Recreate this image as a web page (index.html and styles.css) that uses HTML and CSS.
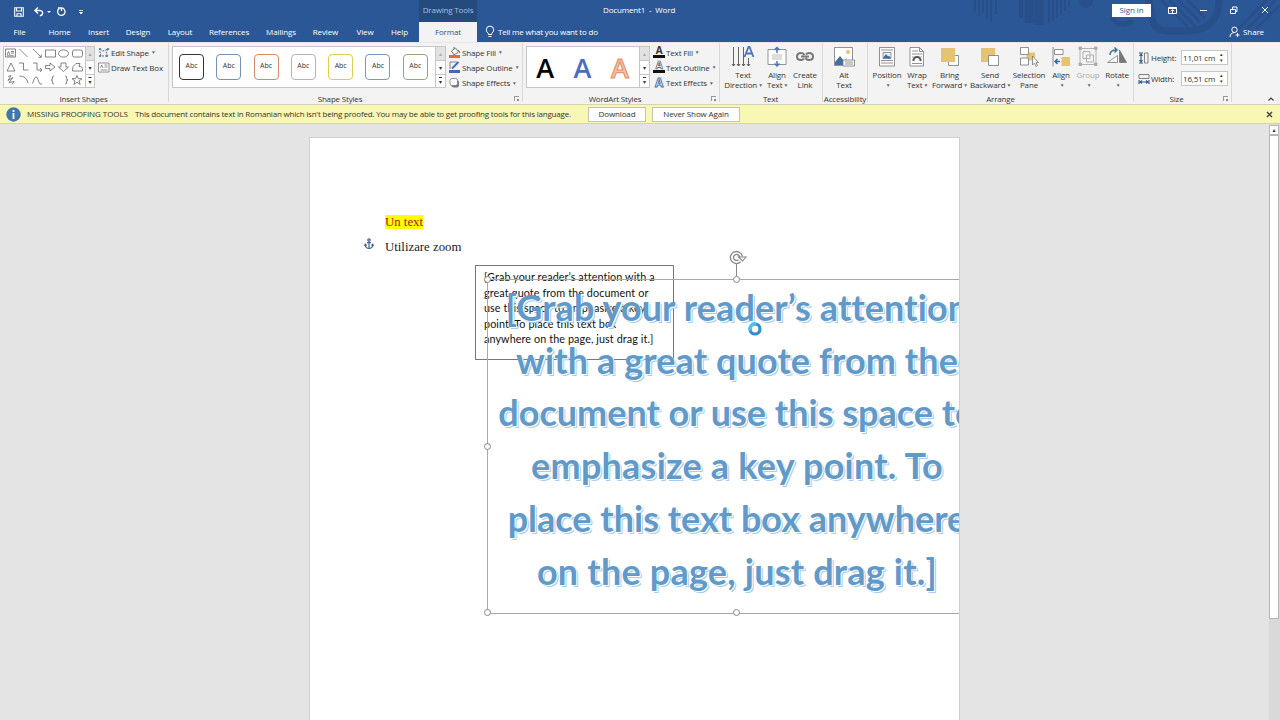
FILE: index.html
```
<!DOCTYPE html>
<html lang="en">
<head>
<meta charset="utf-8">
<title>Document1 - Word</title>
<link rel="stylesheet" href="styles.css">
</head>
<body>
<div class="app">
  <header class="top">
    <svg class="pattern" width="340" height="42" viewBox="940 0 340 42">
      <g stroke="#294f8b" stroke-width="2" fill="none">
        <path d="M975 0v12M979 0v16M983 0v13M987 0v19M991 0v22M996 0v14M1049 0v23M1053 0v21M1057 0v18M1061 0v15M1065 0v11M1069 0v7"/>
        <path stroke-width="4" d="M1021 0v18"/>
        <path stroke-width="9" d="M1029 0v23M1039 0v25"/>
        <path stroke-width="5" d="M1112 17a12 12 0 0 0 20 3"/>
        <path stroke-width="7" d="M1149 0l3 17q2 14 15 14h22q30-2 30-31"/>
        <path stroke-width="3" d="M1161 0l27 27M1169 0l27 27M1178 0l22 22M1187 0l18 18M1238 29l29-29M1247 29l29-29M1256 29l24-24"/>
      </g>
      <circle cx="1086" cy="1" r="7" fill="#294f8b"/>
    </svg>
    <div class="titlebar">
      <div class="quick">
        <svg width="90" height="20" viewBox="0 0 90 20" fill="none" stroke="#fff" stroke-width="1.1">
          <path d="M14.700 6.700h8.600v8.600h-8.600zM16.500 6.700v3.300h5v-3.300M17 15.300v-2.600h4v2.600"/>
          <path d="M38 6.500l-3 3 3 3M35.500 9.500h4.500q3 .3 2.600 3-.4 2-2.800 2.200" stroke-width="1.400"/>
          <path d="M47 10l2 2 2-2z" fill="#fff" stroke="none"/>
          <path d="M59 7.800a3.700 3.700 0 1 0 5 .3M58 7h3.500v3M64 8q-1.200-1.200-2.800-1" stroke-width="1.300"/>
          <path d="M79 9.500h4M79.500 11.500h3l-1.500 1.500z" fill="#fff" stroke-width=".8"/>
        </svg>
      </div>
      <div class="context">Drawing Tools</div>
      <div class="doctitle">Document1&nbsp; - &nbsp;Word</div>
      <div class="signin">Sign in</div>
      <svg class="winctl" width="120" height="20" viewBox="1160 0 120 20" fill="none" stroke="#fff" stroke-width="1">
        <path d="M1168.500 7.500h8v6h-8zM1168 8.500h9M1172.500 13v-3M1170.800 11.300l1.700-1.700 1.700 1.700M1200 10.500h7M1230.500 9.500h5v4h-5zM1232.500 9v-2h4.500v4.500h-1.500M1262 7l6 6M1268 7l-6 6"/>
      </svg>
    </div>
    <nav class="tabs">
      <a class="w39">File</a><a class="w41">Home</a><a class="w37">Insert</a><a class="w42">Design</a><a class="w42">Layout</a><a class="w56">References</a><a class="w48">Mailings</a><a class="w41">Review</a><a class="w38">View</a><a class="w31">Help</a><a class="active">Format</a>
      <div class="tell"><svg width="10" height="14" viewBox="0 0 10 14" fill="none" stroke="#fff"><path d="M3.300 9.500V8.300Q1.300 7 1.300 4.800a3.700 3.700 0 0 1 7.400 0Q8.700 7 6.700 8.300v1.200zM3.500 11.500h3"/></svg>Tell me what you want to do</div>
      <div class="share"><svg width="11" height="12" viewBox="0 0 11 12" fill="none" stroke="#fff"><circle cx="5.500" cy="3.800" r="2.700"/><path d="M1 11q0-4 4.500-4.500M6.500 9h4M8.500 7v4"/></svg>Share</div>
    </nav>
  </header>

  <section class="ribbon">
    <div class="group g-insert">
      <div class="body">
        <div class="gallery shapes">
          <svg width="82" height="41" viewBox="3 46.500 82 41" fill="none" stroke="#666" stroke-width=".8">
            <path d="M5.500 49.500h10v8h-10zM7 55.500l1.500-3.500 1.500 3.500M11 52h3M11 53.500h3M7 56.300h7"/>
            <path d="M19.500 49.500l8 8M33 49.500l8 8M41.300 55v2.800h-2.800M45.500 50.500h10v7h-10z"/>
            <ellipse cx="63.500" cy="54" rx="5" ry="3.600"/><rect x="72.500" y="50.500" width="10" height="7" rx="1.800"/>
            <path d="M7 71.500l4-8 4 8zM19 63.500h4.500v7h5M33 63.500h4v7h5M40 68.500l2 2-2 2M45.500 66h4.500v-2.500l5 4-5 4v-2.500h-4.500zM61 63.500h5v4h2.500l-5 4.500-5-4.500h2.500zM73 67l3-3h4l-1 3q4-1 3.500 4.500h-10z"/>
            <path d="M8 77l3-1-3 5 5-3-4 5 5-1-2 3M19.500 76.500q7 0 8.500 7M32.500 84q3.500-11 5.500-4t4 4M54 76.500q-2 0-1.500 2 0 2-1.500 2 1.500 0 1.500 2-.5 2 1.500 2M65 76.500q2 0 1.500 2 0 2 1.500 2-1.500 0-1.500 2 .5 2-1.500 2M77 76l1.300 3.200h3.700l-3 2.200 1.200 3.600-3.200-2.200-3.200 2.200 1.200-3.600-3-2.200h3.700z"/>
          </svg>
          <div class="scroll"><i class="off">▴</i><i>▾</i><i>▾</i></div>
        </div>
        <div class="list edit">
          <div><svg width="12" height="11" viewBox="0 0 12 11" fill="none" stroke="#667"><path d="M2 2l3 2 5-2-2 4 2 3H3L2 5z" stroke-dasharray="2 1"/><path d="M1 1h2v2H1zM9 1h2v2H9zM1 8h2v2H1zM8 8h2v2H8z" fill="#4c94b0" stroke="none"/></svg>Edit Shape<b>▾</b></div>
          <div><svg width="12" height="11" viewBox="0 0 12 11" fill="#fff" stroke="#777" stroke-width=".8"><path d="M.5 1h10.500v9H.5zM2.500 6l1.200-3L5 6M6.500 3h3M6.500 5h3M2.500 8h7"/></svg>Draw Text Box</div>
        </div>
      </div>
      <div class="label">Insert Shapes</div>
    </div>

    <div class="group g-styles">
      <div class="body">
        <div class="gallery styles">
          <div class="chip c1">Abc</div><div class="chip c2">Abc</div><div class="chip c3">Abc</div><div class="chip c4">Abc</div><div class="chip c5">Abc</div><div class="chip c6">Abc</div><div class="chip c7">Abc</div>
          <div class="scroll"><i class="off">▴</i><i>▾</i><i>▾</i></div>
        </div>
        <div class="list">
          <div><svg width="12" height="12" viewBox="0 0 12 12" fill="#fff" stroke="#666" stroke-width=".9"><path d="M2.500 5l4-3 3 4-4.500 3zM5 3V.8M9 4q2 1 1.500 3"/><path d="M0 9h11v3H0z" fill="#e0702f" stroke="none"/></svg>Shape Fill<b>▾</b></div>
          <div><svg width="12" height="12" viewBox="0 0 12 12" fill="none" stroke="#777" stroke-width=".9"><path d="M1 8V1h7"/><path d="M3 7.500L9.500 1" stroke="#3f6db5" stroke-width="1.800"/><path d="M0 9h11v3H0z" fill="#4468b8" stroke="none"/></svg>Shape Outline<b>▾</b></div>
          <div><svg width="12" height="12" viewBox="0 0 12 12"><rect x="2.500" y="3" width="7.500" height="7.500" rx="2.500" fill="#777"/><rect x="1" y="1.500" width="7.500" height="7" rx="2" fill="#fff" stroke="#777" stroke-width=".8"/></svg>Shape Effects<b>▾</b></div>
        </div>
      </div>
      <div class="label">Shape Styles</div><span class="launch"></span>
    </div>

    <div class="group g-wordart">
      <div class="body">
        <div class="gallery arts">
          <span class="a1">A</span><span class="a2">A</span><span class="a3">A</span>
          <div class="scroll"><i class="off">▴</i><i>▾</i><i>▾</i></div>
        </div>
        <div class="list">
          <div><em class="f1">A</em>Text Fill<b>▾</b></div>
          <div><em class="f2">A</em>Text Outline<b>▾</b></div>
          <div><em class="f3">A</em>Text Effects<b>▾</b></div>
        </div>
      </div>
      <div class="label">WordArt Styles</div><span class="launch"></span>
    </div>

    <div class="group g-text">
      <div class="body">
        <div class="big w38"><svg width="24" height="22" viewBox="0 0 24 22" fill="none" stroke="#555"><path d="M2.500 1v19M7.500 1v19M12.500 1v19M17.500 12v8" stroke-width=".9"/><path d="M1 18l1.500 2L4 18M6 18l1.500 2L9 18M11 18l1.500 2 1.500-2M16 18l1.500 2 1.500-2"/><path d="M13.500 11L17.500 1h1l4 10M15 7.500h6" stroke="#4a77b4" stroke-width="1.800"/></svg><span>Text<br>Direction<b>▾</b></span></div>
        <div class="big w30"><svg width="20" height="22" viewBox="0 0 20 22" fill="#fff" stroke="#777" stroke-width=".8"><path d="M1 3.500h18v15H1z"/><path d="M5 8h10v6H5z" fill="#ddd" stroke="none"/><path d="M10 7V1.500M7.500 4L10 1.500 12.500 4M10 15v5M7.500 17.500L10 20l2.500-2.500" fill="none" stroke="#4a77b4" stroke-width="1.500"/></svg><span>Align<br>Text<b>▾</b></span></div>
        <div class="big w26"><svg width="20" height="22" viewBox="0 0 20 22" fill="none" stroke="#777" stroke-width="2"><path d="M9.500 9q-1-2-3.500-2-4 0-4 3.500T6 14q2 0 3-1.500M10.500 12q1 2 3.500 2 4 0 4-3.500T14 7q-2 0-3 1.500M6 10.500h8"/></svg><span>Create<br>Link</span></div>
      </div>
      <div class="label">Text</div>
    </div>

    <div class="group g-acc">
      <div class="body">
        <div class="big w36"><svg width="22" height="22" viewBox="0 0 22 22" fill="#fff" stroke="#777" stroke-width=".8"><path d="M1.500 1.500h18v18h-18z"/><path d="M2 19v-3l5-6 4 5 2-2 3 6z" fill="#416f9e" stroke="none"/><circle cx="15" cy="6" r="2" fill="#e9c46b" stroke="none"/><path d="M10 14h11.500v6H10zM12 16h8M12 18h8"/></svg><span>Alt<br>Text</span></div>
      </div>
      <div class="label">Accessibility</div>
    </div>

    <div class="group g-arrange">
      <div class="body">
        <div class="big w36"><svg width="18" height="22" viewBox="0 0 18 22" fill="#fff" stroke="#777" stroke-width=".8"><path d="M1.500 1.500h15v18.500h-15zM3 4h12M3 14.500h12M3 17h12"/><path d="M5 6.500h8v6H5z" fill="#ebf3fa"/><path d="M5 12l3-4 2 2.500 1-1 2 3z" fill="#3c69a3" stroke="none"/></svg><span>Position<br><b>▾</b></span></div>
        <div class="big w24"><svg width="16" height="22" viewBox="0 0 16 22" fill="#fff" stroke="#777" stroke-width=".8"><path d="M1 1.500h9.500l4 4V20H1zM10.500 1.500v4h4M3 5h6M3 8h10M3 17.500h10M3 11h1.500M3 14h1.500M11.500 11H13M11.500 14H13"/><path d="M4.500 15q0-4 3.500-4t3.500 4" fill="none" stroke="#555" stroke-width="1.800"/></svg><span>Wrap<br>Text<b>▾</b></span></div>
        <div class="big w41"><svg width="20" height="22" viewBox="0 0 20 22"><path d="M8.500 9.500h10v10h-10z" fill="#fff" stroke="#777" stroke-width=".8"/><path d="M1 2h14v14H1z" fill="#e5c274"/></svg><span>Bring<br>Forward<b>▾</b></span></div>
        <div class="big w40"><svg width="20" height="22" viewBox="0 0 20 22"><path d="M1 2h14v14H1z" fill="#e5c274"/><path d="M8.500 9.500h10v10h-10z" fill="#fff" stroke="#777" stroke-width=".8"/></svg><span>Send<br>Backward<b>▾</b></span></div>
        <div class="big w38"><svg width="20" height="22" viewBox="0 0 20 22" fill="#fff" stroke="#777" stroke-width=".8"><path d="M7.500 6.500H16v8H7.500z" fill="#e5c274" stroke="none"/><path d="M1.500 1.500h8v7h-8zM1.500 12h8v7h-8zM13.500 10v9l2-2 1.500 3.500 1.500-.7-1.500-3.300h2.500z"/></svg><span>Selection<br>Pane</span></div>
        <div class="big w26"><svg width="20" height="22" viewBox="0 0 20 22" fill="#fff" stroke="#777" stroke-width=".8"><path d="M2 1v19.500M3.500 3.500H12v5H3.500z"/><path d="M10.500 11H19v9h-8.500z" fill="#e5c274" stroke="none"/><path d="M9 15.500H4.500M6.500 13L4 15.500 6.500 18" fill="none" stroke="#3c69a3" stroke-width="1.500"/></svg><span>Align<br><b>▾</b></span></div>
        <div class="big w28 dim"><svg width="20" height="22" viewBox="0 0 20 22" fill="none" stroke="#aaa" stroke-width=".9"><path d="M2 2.500h16v16H2zM5 5.500h7v7H5zM8.500 9h7v7h-7z"/><path d="M1 1h2.500v2.500H1zM16.500 1H19v2.500h-2.500zM1 17h2.500v2.500H1zM16.500 17H19v2.500h-2.500z" fill="#aaa"/></svg><span>Group<br><b>▾</b></span></div>
        <div class="big w30"><svg width="22" height="22" viewBox="0 0 22 22" fill="#fff" stroke="#777" stroke-width=".8"><path d="M1.500 16.500L11.500 9.500v7z"/><path d="M13.500 4v12.500h7z" fill="#777"/><path d="M4 9q0-5 6-5M8.500 1.500L11 4 8.500 6.500" fill="none" stroke="#3f769e" stroke-width="1.600"/></svg><span>Rotate<br><b>▾</b></span></div>
      </div>
      <div class="label">Arrange</div>
    </div>

    <div class="group g-size">
      <div class="sizes">
        <div class="field"><svg width="12" height="12" viewBox="0 0 12 12" fill="none" stroke="#666" stroke-width=".8"><path d="M6.500 1H10v10H6.500z"/><path d="M1 1h4M1 11h4M3 2v8M1.500 3.800L3 2l1.500 1.800M1.500 8.200L3 10l1.500-1.800" stroke="#31588f" stroke-width="1.100"/></svg><span>Height:</span><div class="input">11,01 cm<i>▴<br>▾</i></div></div>
        <div class="field"><svg width="12" height="12" viewBox="0 0 12 12" fill="none" stroke="#666" stroke-width=".8"><path d="M1 1.500h10v4H1z"/><path d="M1 7v4M11 7v4M2 9h8M3.800 7.500L2 9l1.800 1.500M8.200 7.500L10 9l-1.800 1.500" stroke="#31588f" stroke-width="1.100"/></svg><span>Width:</span><div class="input">16,51 cm<i>▴<br>▾</i></div></div>
      </div>
      <div class="label">Size</div><span class="launch"></span>
    </div>
    <svg class="collapse" width="8" height="6" viewBox="0 0 8 6" fill="none" stroke="#444" stroke-width="1.200"><path d="M1.500 4.500L4 2l2.500 2.500"/></svg>
  </section>

  <div class="notice">
    <svg width="15" height="15" viewBox="0 0 15 15"><circle cx="7.500" cy="7.500" r="7.200" fill="#4277ad"/><path d="M7.500 6v6M7.500 3v2" stroke="#fff" stroke-width="1.800"/></svg>
    <span class="head">MISSING PROOFING TOOLS</span>
    <span class="msg">This document contains text in Romanian which isn't being proofed. You may be able to get proofing tools for this language.</span>
    <div class="btn download">Download</div><div class="btn never">Never Show Again</div>
    <svg class="close" width="7" height="7" viewBox="0 0 7 7" stroke="#444" stroke-width="1.400"><path d="M1 1l5 5M6 1L1 6"/></svg>
  </div>

  <main class="workspace">
    <article class="page">
      <p class="marked"><mark>Un text</mark></p>
      <p class="para">Utilizare zoom</p>
      <svg class="anchor" width="10" height="12" viewBox="0 0 10 12" fill="none" stroke="#42658f" stroke-width="1.200"><circle cx="5" cy="2" r="1.200"/><path d="M5 3.200v7M3 4.700h4M1 6.500q.5 3.800 4 4 3.500-.2 4-4M.5 8l.7-1.700L2.700 7.500M9.500 8l-.7-1.700L7.300 7.500"/></svg>
      <div class="quote">[Grab your reader’s attention with a<br>great quote from the document or<br>use this space to emphasize a key<br>point. To place this text box<br>anywhere on the page, just drag it.]</div>
      <div class="wordart">
        <div class="l1">[Grab your reader’s attention</div><div class="l2">with a great quote from the</div><div class="l3">document or use this space to</div><div class="l4">emphasize a key point. To</div><div class="l5">place this text box anywhere</div><div class="l6">on the page, just drag it.]</div>
        <i class="handle tl"></i><i class="handle tc"></i><i class="handle ml"></i><i class="handle bl"></i><i class="handle bc"></i>
        <svg class="rotate" width="20" height="30" viewBox="0 0 20 30" fill="none" stroke="#888"><path d="M8.500 15v12"/><path d="M14.300 7.500a6 6 0 1 0-1.600 5.200M11.500 8.500a3 3 0 1 0-1 2.200" stroke-width="1.300"/><path d="M10.500 8h7.500l-3.500 4z" fill="#fff" stroke-width="1.100"/></svg>
      </div>
      <svg class="busy" width="14" height="14" viewBox="0 0 14 14" fill="none" stroke-width="3.200"><circle cx="7" cy="7" r="5" fill="#fff" stroke="#2f8fd0"/><path d="M2.300 8.500A5 5 0 0 1 8 2.100" stroke="#49c4ee"/></svg>
    </article>
    <div class="vbar"><i>▴</i><div class="thumb"></div></div>
  </main>
</div>
</body>
</html>
```
FILE: styles.css
```
* { box-sizing: border-box; }
body { margin: 0; width: 1280px; height: 720px; overflow: hidden; font-family: "Open Sans", "Noto Sans", sans-serif; font-size: 8px; letter-spacing: -.18px; color: #333; }
.app { display: flex; flex-direction: column; height: 720px; }
b, i, em { font-style: normal; font-weight: normal; }
svg { flex: none; display: block; }

.top { position: relative; height: 42px; background: #2b5797; color: #fff; }
.pattern { position: absolute; right: 0; top: 0; }
.titlebar { position: relative; display: flex; height: 22px; line-height: 20px; }
.quick { width: 419px; }
.quick svg { margin-top: 1px; }
.context { width: 58px; background: #254a7e; color: #a9bfdf; text-align: center; }
.doctitle { margin-left: 126px; width: 509px; letter-spacing: -.15px; }
.signin { width: 39px; height: 13px; margin-top: 4px; background: #fff; color: #2b5797; text-align: center; line-height: 12px; letter-spacing: -.1px; }
.winctl { margin-left: 9px; }
.tabs { position: relative; display: flex; height: 20px; line-height: 20px; letter-spacing: -.12px; }
.tabs a { text-align: center; white-space: nowrap; }
.tabs .active { width: 58px; margin-left: 4px; background: #f3f3f3; color: #2b5797; }
.tell, .share { display: flex; align-items: center; gap: 3px; }
.tell { margin-left: 8px; letter-spacing: -.2px; }
.share { margin-left: auto; margin-right: 16px; }
.w24 { width: 24px; } .w26 { width: 26px; } .w28 { width: 28px; } .w30 { width: 30px; } .w31 { width: 31px; }
.w36 { width: 36px; } .w37 { width: 37px; } .w38 { width: 38px; } .w39 { width: 39px; } .w40 { width: 40px; }
.w41 { width: 41px; } .w42 { width: 42px; } .w48 { width: 48px; } .w56 { width: 56px; }

.ribbon { display: flex; height: 62px; background: #f3f3f3; border-top: 1px solid #e4e8ee; }
.group { position: relative; display: flex; flex-direction: column; height: 59px; border-right: 1px solid #d8d8d8; padding-top: 3px; }
.body, .sizes { flex: none; display: flex; height: 46px; }
.label { flex: none; text-align: center; line-height: 13px; white-space: nowrap; }
.g-insert { width: 169px; padding-left: 3px; }
.g-insert .label { margin-right: 4px; }
.g-styles { width: 354px; padding-left: 3px; }
.g-styles .label { margin-right: 14px; }
.g-wordart { width: 197px; padding-left: 3px; }
.g-wordart .label { margin-right: 15px; }
.g-text { width: 103px; padding-left: 4px; }
.g-text .label { margin-right: 5px; }
.g-acc { width: 45px; padding-left: 3px; }
.g-acc .label { margin-left: -3px; }
.g-arrange { width: 266px; padding-left: 1px; }
.g-arrange .label { margin-right: 1px; }
.g-size { width: 98px; padding-left: 4px; }
.g-size .label { margin-right: 16px; }
.launch { position: absolute; right: 3px; bottom: 1px; width: 5px; height: 5px; border-left: 1px solid #999; border-top: 1px solid #999; background: linear-gradient(#888, #888) right bottom / 2px 2px no-repeat; }
.gallery { display: flex; height: 42px; background: #fff; border: 1px solid #c6c6c6; }
.shapes { width: 92px; }
.shapes svg { margin: -1px 0 0 -1px; }
.scroll { margin-left: auto; width: 10px; display: flex; flex-direction: column; border-left: 1px solid #c6c6c6; }
.scroll i { flex: 1; line-height: 13px; font-size: 6px; font-weight: 400; text-align: center; letter-spacing: 0; font-family: "DejaVu Sans", sans-serif; }
.scroll i + i { border-top: 1px solid #c6c6c6; }
.scroll i:last-child { text-decoration: overline; }
.scroll .off { background: #e2e2e2; color: #aaa; }
.list { display: flex; flex-direction: column; margin-left: 3px; }
.list div { display: flex; align-items: center; height: 15.400px; line-height: 15px; gap: 1px; white-space: nowrap; margin-top: -1.500px; margin-bottom: 1.500px; letter-spacing: -.15px; }
.list b, .big b { font-family: "DejaVu Sans", sans-serif; font-size: 5.500px; margin-left: 2px; line-height: 6px; vertical-align: 1px; color: #666; }
.styles { width: 274px; padding-left: 6px; align-items: flex-start; }
.styles .scroll { height: 40px; }
.chip { width: 25px; height: 26px; margin: 7px 12.300px 0 0; flex: none; border: 1px solid; border-radius: 4px; text-align: center; line-height: 21px; font-size: 7px; letter-spacing: 0; }
.styles .c7 { margin-right: 0; }
.c1 { border-color: #333; } .c2 { border-color: #7890b8; } .c3 { border-color: #d88a62; } .c4 { border-color: #b5b5b5; }
.c5 { border-color: #d8cf55; } .c6 { border-color: #7c97c4; } .c7 { border-color: #93a67f; }
.arts { width: 124px; font: 600 27px/41px "Open Sans", sans-serif; letter-spacing: 0; }
.arts span { width: 37.500px; text-align: center; padding-right: 1px; }
.arts .a1 { color: #000; }
.arts .a2 { color: #4a6dbd; }
.arts .a3 { color: #f7bea0; -webkit-text-stroke: 1px #df8f69; }
.list em { width: 12px; height: 12px; text-align: center; font: bold 10px/9px "Open Sans", sans-serif; }
.f1 { border-bottom: 3px solid #111; }
.list .f2 { border-bottom: 3px solid #111; color: #fff; -webkit-text-stroke: .7px #555; }
.list .f3 { color: #fff; font-size: 12px; line-height: 12px; -webkit-text-stroke: .9px #416fae; }
.big { display: flex; flex-direction: column; align-items: center; }
.big span { text-align: center; line-height: 10.700px; white-space: nowrap; margin-top: 1.500px; letter-spacing: -.12px; }
.dim { color: #aaa; }
.sizes { flex-direction: column; gap: 6px; padding-top: 4px; }
.field { display: flex; align-items: center; height: 15px; }
.field > span { width: 31px; padding-left: 1px; }
.input { width: 47px; height: 15px; background: #fff; border: 1px solid #c6c6c6; line-height: 13px; padding-left: 1px; display: flex; justify-content: space-between; white-space: nowrap; }
.input i { width: 7px; font: 5px/6px "DejaVu Sans", sans-serif; }
.collapse { margin: 53px 0 0 35px; }

.notice { display: flex; align-items: center; height: 20px; padding-left: 6px; background: #f9f7b4; border-top: 1px solid #d6d4ad; border-bottom: 1px solid #d6d4ad; white-space: nowrap; line-height: 10px; }
.notice span { padding-bottom: 1px; }
.head { margin-left: 6px; width: 108px; letter-spacing: -.06px; }
.msg { width: 453px; letter-spacing: -.2px; }
.btn { height: 15px; border: 1px solid #c3c3b5; background: #fdfdfd; text-align: center; line-height: 12px; letter-spacing: -.13px; }
.download { width: 58px; margin-right: 6px; }
.never { width: 88px; }
.close { margin-left: auto; margin-right: 7px; }

.workspace { position: relative; display: flex; justify-content: space-between; height: 596px; background: #e4e4e4; }
.page { position: relative; margin: 13px 0 0 309px; width: 651px; height: 583px; padding: 77px 0 0 75px; background: #fff; border: 1px solid #cfcfcf; border-bottom: 0; overflow: hidden; font-family: "Liberation Serif", serif; font-size: 12.800px; letter-spacing: 0; color: #222; }
.page p { margin: 0; line-height: 14px; }
.marked mark { background: #ff0; color: #b01000; }
.page .para { margin-top: 11px; }
.anchor { position: absolute; left: 54px; top: 100px; }
.quote { position: absolute; left: 165px; top: 127px; width: 199px; height: 95px; border: 1px solid #777; padding: 3px 8px; font: 10.800px/15.500px Lato, sans-serif; letter-spacing: .09px; color: #111; white-space: nowrap; }
.wordart { position: absolute; left: 177px; top: 141px; width: 500px; height: 335px; border: 1px solid #a8a8a8; padding-top: 1px; text-align: center; white-space: nowrap; font: bold 36px/52.700px Lato, sans-serif; font-variant-ligatures: none; color: #6199c9; text-shadow: 1px 1px 0 #fff, 2px 2px 0 #a6cdee; }
.l1, .l2 { letter-spacing: .1px; }
.l4 { letter-spacing: .22px; }
.l6 { letter-spacing: .2px; }
.handle { position: absolute; width: 7px; height: 7px; border: 1.500px solid #888; border-radius: 50%; background: #fff; }
.tl { left: -4px; top: -4px; } .tc { left: 245px; top: -4px; } .ml { left: -4px; top: 163px; } .bl { left: -4px; top: 329px; } .bc { left: 245px; top: 329px; }
.rotate { position: absolute; left: 240px; top: -31px; }
.busy { position: absolute; left: 438px; top: 184px; }
.vbar { width: 11px; height: 596px; background: #d9d9d9; padding: 1px 1px 0 0; }
.vbar i { display: block; height: 10px; background: #fff; border: 1px solid #bbb; font: 6px/8px "DejaVu Sans", sans-serif; text-align: center; }
.thumb { height: 484px; background: #fff; border: 1px solid #b5b5b5; }
```
